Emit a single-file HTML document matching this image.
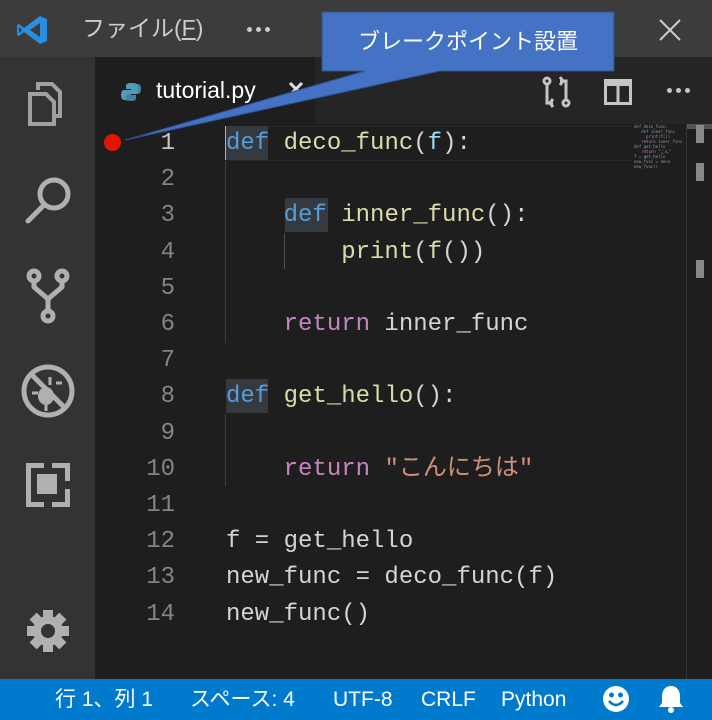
<!DOCTYPE html>
<html><head><meta charset="utf-8"><style>
*{margin:0;padding:0;box-sizing:border-box}
body{width:712px;height:720px;background:#1e1e1e;position:relative;overflow:hidden;font-family:"Liberation Sans","Noto Sans CJK JP",sans-serif}
.abs{position:absolute}
#title{left:0;top:0;width:712px;height:57px;background:#3c3c3c}
#act{left:0;top:57px;width:95px;height:623px;background:#333}
#tabs{left:95px;top:57px;width:617px;height:67px;background:#252526}
#tab{left:95px;top:57px;width:220px;height:67px;background:#1e1e1e}
#status{left:0;top:679px;width:712px;height:41px;background:#007acc;color:#fff;font-size:21px}
#status span{line-height:41px;top:0}
.code{font-family:"Liberation Mono","DejaVu Sans Mono","Noto Sans CJK JP",monospace;font-size:24px;line-height:36.2px;white-space:pre;color:#d4d4d4}
.ln{left:120px;width:55px;text-align:right;color:#858585}
.k{color:#569cd6}.f{color:#dcdcaa}.r{color:#c586c0}.s{color:#ce9178}.p{color:#9cdcfe}
.dots{display:flex;gap:4px}.dots i{width:5px;height:5px;border-radius:50%;background:#ccc;display:block}
</style></head><body>
<div id="title" class="abs"></div>
<svg class="abs" style="left:16px;top:14px" width="34" height="32" viewBox="0 0 34 32"><path d="M24 2 L31 5 V27 L24 30 L8 18 L3 22 L1 21 V11 L3 10 L8 14 Z M24 9 L14 16 L24 23 Z M3 13 V19 L6 16 Z" fill="#2a8ee0"/></svg>
<div class="abs" style="left:82px;top:12px;color:#ccc;font-size:23px;line-height:32px">ファイル(<u>F</u>)</div>
<div class="abs dots" style="left:247px;top:27px"><i></i><i></i><i></i></div>
<svg class="abs" style="left:659px;top:19px" width="22" height="22" stroke="#ccc" stroke-width="2"><path d="M1 1L21 21M21 1L1 21"/></svg>
<div id="act" class="abs"></div>
<div id="tabs" class="abs"></div>
<div id="tab" class="abs"></div>
<svg class="abs" style="left:121px;top:82px" width="20" height="20" viewBox="0 0 20 20"><path d="M10 1c-5 0-5 2-5 3v3h5v1H3c-2 0-3 2-3 5s1 5 3 5h2v-3c0-2 2-3 4-3h5c2 0 3-1 3-3V4c0-2-2-3-7-3z" fill="#519aba"/><path d="M10 19c5 0 5-2 5-3v-3h-5v-1h7c2 0 3-2 3-5s-1-5-3-5h-2v3c0 2-2 3-4 3H6c-2 0-3 1-3 3v5c0 2 2 3 7 3z" fill="#519aba" opacity=".8"/></svg>
<div class="abs" style="left:156px;top:77px;color:#fff;font-size:23px">tutorial.py</div>
<svg class="abs" style="left:289px;top:82px" width="14" height="14" stroke="#ddd" stroke-width="3"><path d="M1 1L13 13M13 1L1 13"/></svg>
<svg class="abs" style="left:540px;top:76px" width="34" height="32" viewBox="0 0 34 32" fill="none" stroke="#c5c5c5" stroke-width="3"><circle cx="7" cy="5" r="3"/><circle cx="26" cy="27" r="3"/><path d="M7 8v19h6M26 24V5h-6M13 23l-3 4 3 4M20 1l3 4-3 4"/></svg>
<svg class="abs" style="left:604px;top:79px" width="28" height="26"><rect x="1.5" y="1.5" width="25" height="23" fill="none" stroke="#c5c5c5" stroke-width="3"/><rect x="1" y="1" width="26" height="6" fill="#c5c5c5"/><path d="M14 1v24" stroke="#c5c5c5" stroke-width="3"/></svg>
<div class="abs dots" style="left:667px;top:88px"><i style="background:#c5c5c5"></i><i style="background:#c5c5c5"></i><i style="background:#c5c5c5"></i></div>
<svg class="abs" style="left:24px;top:80px" width="46" height="48" fill="none" stroke="#a0a0a0" stroke-width="4"><path d="M14 10V4h14l8 8v24h-6"/><path d="M6 14h16l8 8v22H6z"/></svg>
<svg class="abs" style="left:24px;top:176px" width="48" height="50" fill="none" stroke="#b0b0b0" stroke-width="5" stroke-linecap="round"><circle cx="30" cy="18" r="14"/><path d="M20 29L4 45"/></svg>
<svg class="abs" style="left:26px;top:266px" width="44" height="60" fill="none" stroke="#b0b0b0" stroke-width="5"><circle cx="8" cy="10" r="5"/><circle cx="36" cy="10" r="5"/><circle cx="22" cy="50" r="5"/><path d="M8 15v6l14 12 14-12v-6M22 33v12"/></svg>
<svg class="abs" style="left:20px;top:363px" width="56" height="56" fill="none" stroke="#b0b0b0" stroke-width="5"><circle cx="28" cy="28" r="24"/><path d="M12 12l32 32"/><ellipse cx="26" cy="33" rx="8" ry="9" fill="#b0b0b0" stroke="none"/><path d="M30 14v8M36 20h6M12 30h6M26 42v6" stroke-width="3"/></svg>
<svg class="abs" style="left:26px;top:463px" width="44" height="44"><path d="M0 0h18v5H5v34h13v5H0z M26 0h18v18h-5V5H26z M44 26v18H26v-5h13V26z" fill="#b0b0b0"/><rect x="11" y="11" width="20" height="20" fill="#b0b0b0"/></svg>
<svg class="abs" style="left:25px;top:608px" width="46" height="46" viewBox="0 0 46 46"><g fill="#b0b0b0"><circle cx="23" cy="23" r="15"/><rect x="18" y="2" width="10" height="42"/><rect x="18" y="2" width="10" height="42" transform="rotate(45 23 23)"/><rect x="18" y="2" width="10" height="42" transform="rotate(90 23 23)"/><rect x="18" y="2" width="10" height="42" transform="rotate(135 23 23)"/></g><circle cx="23" cy="23" r="7" fill="#333"/></svg>
<div class="abs" style="left:226px;top:126px;width:406px;height:35px;border-top:1px solid #282828;border-bottom:1px solid #282828"></div>
<div class="abs" style="left:225px;top:126px;width:2px;height:34px;background:#aeafad"></div>
<div class="abs" style="left:226px;top:126px;width:42px;height:34px;background:#343a40"></div>
<div class="abs" style="left:285px;top:198px;width:43px;height:34px;background:#343a40"></div>
<div class="abs" style="left:226px;top:379px;width:42px;height:34px;background:#343a40"></div>
<div class="abs" style="left:225px;top:161px;width:1px;height:182px;background:#404040"></div>
<div class="abs" style="left:284px;top:233px;width:1px;height:36px;background:#505050"></div>
<div class="abs" style="left:225px;top:414px;width:1px;height:72px;background:#404040"></div>
<div class="abs" style="left:104px;top:134px;width:17px;height:17px;border-radius:50%;background:#e51400"></div>
<div class="abs code ln" style="top:126px"><span style="color:#c6c6c6">1</span>
2
3
4
5
6
7
8
9
10
11
12
13
14</div>
<div class="abs code" style="left:226px;top:126px"><span class="k">def</span> <span class="f">deco_func</span>(<span class="p">f</span>):

    <span class="k">def</span> <span class="f">inner_func</span>():
        <span class="f">print</span>(<span class="f">f</span>())

    <span class="r">return</span> inner_func

<span class="k">def</span> <span class="f">get_hello</span>():

    <span class="r">return</span> <span class="s">"こんにちは"</span>

f = get_hello
new_func = deco_func(f)
new_func()</div>
<div class="abs" style="left:634px;top:124px;width:50px;height:60px;font-size:4px;line-height:5px;color:#999;white-space:pre;font-family:monospace"><span style="color:#569cd6">def</span> deco_func:
   <span style="color:#569cd6">def</span> inner_func
     print(f())
   <span style="color:#c586c0">return</span> inner_func
<span style="color:#569cd6">def</span> get_hello
   <span style="color:#c586c0">return</span> <span style="color:#ce9178">"こん"</span>
f = get_hello
new_func = deco
new_func()</div>
<div class="abs" style="left:686px;top:124px;width:1px;height:556px;background:#333"></div>
<div class="abs" style="left:687px;top:124px;width:25px;height:5px;background:#555"></div>
<div class="abs" style="left:696px;top:125px;width:8px;height:18px;background:#888"></div>
<div class="abs" style="left:696px;top:163px;width:8px;height:18px;background:#888"></div>
<div class="abs" style="left:696px;top:260px;width:8px;height:18px;background:#888"></div>
<svg class="abs" style="left:0;top:0" width="712" height="160"><polygon points="322,12 614,12 614,71 440,71 125,140 365,71 322,71" fill="#4472c4" stroke="#2f528f" stroke-width="1"/></svg>
<div class="abs" style="left:322px;top:24px;width:292px;text-align:center;color:#fff;font-size:22px">ブレークポイント設置</div>
<div id="status" class="abs"><span class="abs" style="left:55px">行 1、列 1</span><span class="abs" style="left:190px">スペース: 4</span><span class="abs" style="left:333px">UTF-8</span><span class="abs" style="left:421px">CRLF</span><span class="abs" style="left:501px">Python</span>
<svg class="abs" style="left:602px;top:6px" width="28" height="28"><circle cx="14" cy="14" r="13" fill="#fff"/><circle cx="9.5" cy="10" r="2.5" fill="#007acc"/><circle cx="18.5" cy="10" r="2.5" fill="#007acc"/><path d="M7 16q7 8 14 0" stroke="#007acc" stroke-width="2.5" fill="none"/></svg>
<svg class="abs" style="left:657px;top:5px" width="28" height="30"><path d="M14 2c-6 0-9 5-9 10v7l-3 4h24l-3-4v-7c0-5-3-10-9-10z" fill="#fff"/><circle cx="14" cy="26" r="3" fill="#fff"/></svg></div>
</body></html>
